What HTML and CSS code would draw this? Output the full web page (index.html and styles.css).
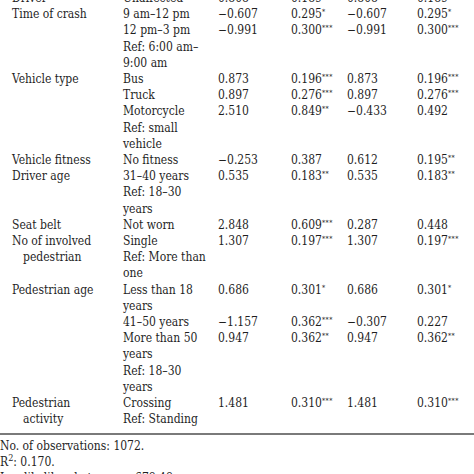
FILE: index.html
```html
<!DOCTYPE html>
<html>
<head>
<meta charset="utf-8">
<link rel="stylesheet" href="styles.css">
</head>
<body>
<div class="page">
  <table class="results">
    <colgroup>
      <col class="c1"><col class="c2"><col class="c3"><col class="c4"><col class="c5"><col class="c6">
    </colgroup>
    <tbody>
      <tr><td class="var">Driver</td><td>Unaffected</td><td>0.808</td><td>0.189<sup>***</sup></td><td>0.808</td><td>0.189<sup>***</sup></td></tr>
      <tr><td class="var" rowspan="3">Time of crash</td><td>9 am–12 pm</td><td>−0.607</td><td>0.295<sup>*</sup></td><td>−0.607</td><td>0.295<sup>*</sup></td></tr>
      <tr><td>12 pm–3 pm</td><td>−0.991</td><td>0.300<sup>***</sup></td><td>−0.991</td><td>0.300<sup>***</sup></td></tr>
      <tr><td>Ref: 6:00 am–9:00 am</td><td></td><td></td><td></td><td></td></tr>
      <tr><td class="var" rowspan="4">Vehicle type</td><td>Bus</td><td>0.873</td><td>0.196<sup>***</sup></td><td>0.873</td><td>0.196<sup>***</sup></td></tr>
      <tr><td>Truck</td><td>0.897</td><td>0.276<sup>***</sup></td><td>0.897</td><td>0.276<sup>***</sup></td></tr>
      <tr><td>Motorcycle</td><td>2.510</td><td>0.849<sup>**</sup></td><td>−0.433</td><td>0.492</td></tr>
      <tr><td>Ref: small vehicle</td><td></td><td></td><td></td><td></td></tr>
      <tr><td class="var">Vehicle fitness</td><td>No fitness</td><td>−0.253</td><td>0.387</td><td>0.612</td><td>0.195<sup>**</sup></td></tr>
      <tr><td class="var" rowspan="2">Driver age</td><td>31–40 years</td><td>0.535</td><td>0.183<sup>**</sup></td><td>0.535</td><td>0.183<sup>**</sup></td></tr>
      <tr><td>Ref: 18–30 years</td><td></td><td></td><td></td><td></td></tr>
      <tr><td class="var">Seat belt</td><td>Not worn</td><td>2.848</td><td>0.609<sup>***</sup></td><td>0.287</td><td>0.448</td></tr>
      <tr><td class="var" rowspan="2">No of involved pedestrian</td><td>Single</td><td>1.307</td><td>0.197<sup>***</sup></td><td>1.307</td><td>0.197<sup>***</sup></td></tr>
      <tr><td>Ref: More than one</td><td></td><td></td><td></td><td></td></tr>
      <tr><td class="var" rowspan="4">Pedestrian age</td><td>Less than 18 years</td><td>0.686</td><td>0.301<sup>*</sup></td><td>0.686</td><td>0.301<sup>*</sup></td></tr>
      <tr><td>41–50 years</td><td>−1.157</td><td>0.362<sup>***</sup></td><td>−0.307</td><td>0.227</td></tr>
      <tr><td>More than 50 years</td><td>0.947</td><td>0.362<sup>**</sup></td><td>0.947</td><td>0.362<sup>**</sup></td></tr>
      <tr><td>Ref: 18–30 years</td><td></td><td></td><td></td><td></td></tr>
      <tr><td class="var" rowspan="2">Pedestrian activity</td><td>Crossing</td><td>1.481</td><td>0.310<sup>***</sup></td><td>1.481</td><td>0.310<sup>***</sup></td></tr>
      <tr><td>Ref: Standing</td><td></td><td></td><td></td><td></td></tr>
    </tbody>
  </table>
  <div class="notes">
    <p>No. of observations: 1072.</p>
    <p>R<sup class="sq">2</sup>: 0.170.</p>
    <p>Log likelihood at zero: −678.48.</p>
  </div>
</div>
</body>
</html>
```
FILE: styles.css
```css
html, body {
  margin: 0;
  padding: 0;
  background: #ffffff;
  overflow: hidden;
}
body {
  width: 474px;
  height: 474px;
  font-family: "DejaVu Serif Condensed", "DejaVu Serif", serif;
  font-stretch: condensed;
  font-size: 12px;
  color: #1f1f1f;
}
.page {
  margin-top: -10px;
}
.results {
  width: 474px;
  border-collapse: collapse;
  table-layout: fixed;
  border-bottom: 2px solid #7a7a7a;
}
.c1 { width: 123px; }
.c2 { width: 95px; }
.c3 { width: 73px; }
.c4 { width: 56px; }
.c5 { width: 70px; }
.c6 { width: 57px; }
.results td {
  padding: 0 6px 0 0;
  line-height: 16.2px;
  vertical-align: top;
  white-space: normal;
}
.results td.var {
  padding-left: 23px;
  text-indent: -11px;
  padding-right: 14px;
}
.results tr:last-child td {
  padding-bottom: 6px;
}
.results sup {
  font-size: 7px;
  line-height: 0;
  vertical-align: 4px;
  letter-spacing: 0.5px;
}
.notes {
  padding-top: 3px;
}
.notes p {
  margin: 0;
  height: 16px;
  line-height: 16px;
}
.notes .sq {
  font-size: 9px;
  line-height: 0;
  vertical-align: 5px;
}
```
